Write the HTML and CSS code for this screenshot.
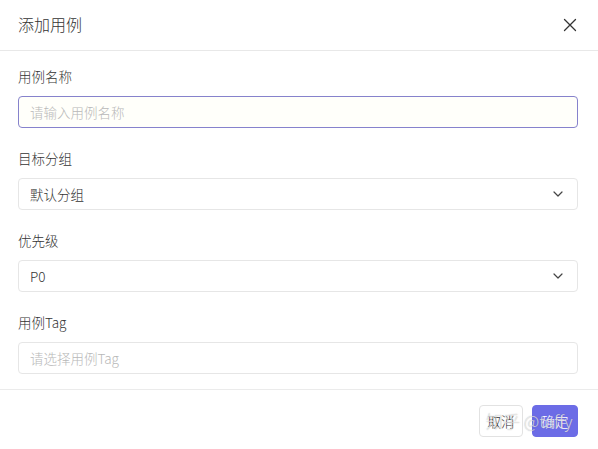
FILE: index.html
```html
<!DOCTYPE html>
<html lang="zh">
<head>
<meta charset="utf-8">
<title>添加用例</title>
<link rel="stylesheet" href="styles.css">
</head>
<body>
<div class="modal">
  <div class="modal-header">
    <span class="modal-title">添加用例</span>
    <span class="close" aria-label="关闭">
      <svg width="14" height="14" viewBox="0 0 14 14"><path d="M1.5 1.5 L12.5 12.5 M12.5 1.5 L1.5 12.5" stroke="#333" stroke-width="1.3" fill="none" stroke-linecap="round"/></svg>
    </span>
  </div>
  <div class="modal-body">
    <div class="form-item">
      <div class="label">用例名称</div>
      <div class="field field-focus"><span class="placeholder">请输入用例名称</span></div>
    </div>
    <div class="form-item">
      <div class="label">目标分组</div>
      <div class="field"><span class="value">默认分组</span>
        <svg class="chev" width="10" height="6" viewBox="0 0 10 6"><path d="M1 1 L5 5 L9 1" stroke="#444" stroke-width="1.2" fill="none" stroke-linecap="round" stroke-linejoin="round"/></svg>
      </div>
    </div>
    <div class="form-item">
      <div class="label">优先级</div>
      <div class="field"><span class="value">P0</span>
        <svg class="chev" width="10" height="6" viewBox="0 0 10 6"><path d="M1 1 L5 5 L9 1" stroke="#444" stroke-width="1.2" fill="none" stroke-linecap="round" stroke-linejoin="round"/></svg>
      </div>
    </div>
    <div class="form-item last">
      <div class="label">用例Tag</div>
      <div class="field"><span class="placeholder">请选择用例Tag</span></div>
    </div>
  </div>
  <div class="modal-footer">
    <button class="btn btn-default">取消</button>
    <button class="btn btn-primary">确定</button>
    <span class="watermark">知乎 @taffy</span>
  </div>
</div>
</body>
</html>
```

FILE: styles.css
```css
* { box-sizing: border-box; }
html, body { margin: 0; padding: 0; background: #fff; }
body {
  font-family: "Noto Sans CJK SC", "Noto Sans", "Liberation Sans", sans-serif;
  font-weight: 300;
  color: #333;
}
.modal { width: 598px; height: 449px; background: #fff; }
.modal-header {
  height: 51px;
  border-bottom: 1px solid #e8e8e8;
  display: flex;
  align-items: center;
  justify-content: space-between;
  padding: 0 21px 2px 18px;
}
.modal-title { font-size: 16px; line-height: 22px; color: #333; }
.close { display: flex; width: 14px; height: 14px; margin-top: 2px; }
.modal-body { padding: 15px 20px 15px 18px; }
.form-item { margin-bottom: 20px; }
.form-item.last { margin-bottom: 0; }
.label { font-size: 13.5px; line-height: 20px; height: 20px; margin-bottom: 10px; color: #333; }
.field {
  height: 32px;
  border: 1px solid #e6e6e6;
  border-radius: 4px;
  display: flex;
  align-items: center;
  justify-content: space-between;
  padding: 0 14px 0 11px;
  font-size: 13.5px;
  background: #fff;
}
.field-focus { border-color: #8682cc; background: #fffffa; }
.placeholder { color: #b8b8b8; }
.value { color: #333; }
.chev { display: block; }
.modal-footer {
  border-top: 1px solid #ebebeb;
  padding: 15px 20px 0 18px;
  display: flex;
  justify-content: flex-end;
  gap: 9px;
  position: relative;
}
.btn {
  height: 32px;
  font-family: inherit;
  font-weight: 300;
  font-size: 13.5px;
  border-radius: 4px;
  padding: 0;
  white-space: nowrap;
  text-align: center;
  cursor: pointer;
}
.btn-default { background: #fff; border: 1px solid #e2e2e2; color: #333; width: 44px; }
.btn-primary { background: #6c6ce6; border: 1px solid #6c6ce6; color: #fff; width: 46px; }
.watermark {
  position: absolute;
  left: 486px;
  top: 19px;
  font-size: 17px;
  line-height: 24px;
  color: rgba(255, 255, 255, 0.7);
  text-shadow: 0 0 1px rgba(90, 90, 90, 0.55);
  pointer-events: none;
  white-space: nowrap;
}
```
